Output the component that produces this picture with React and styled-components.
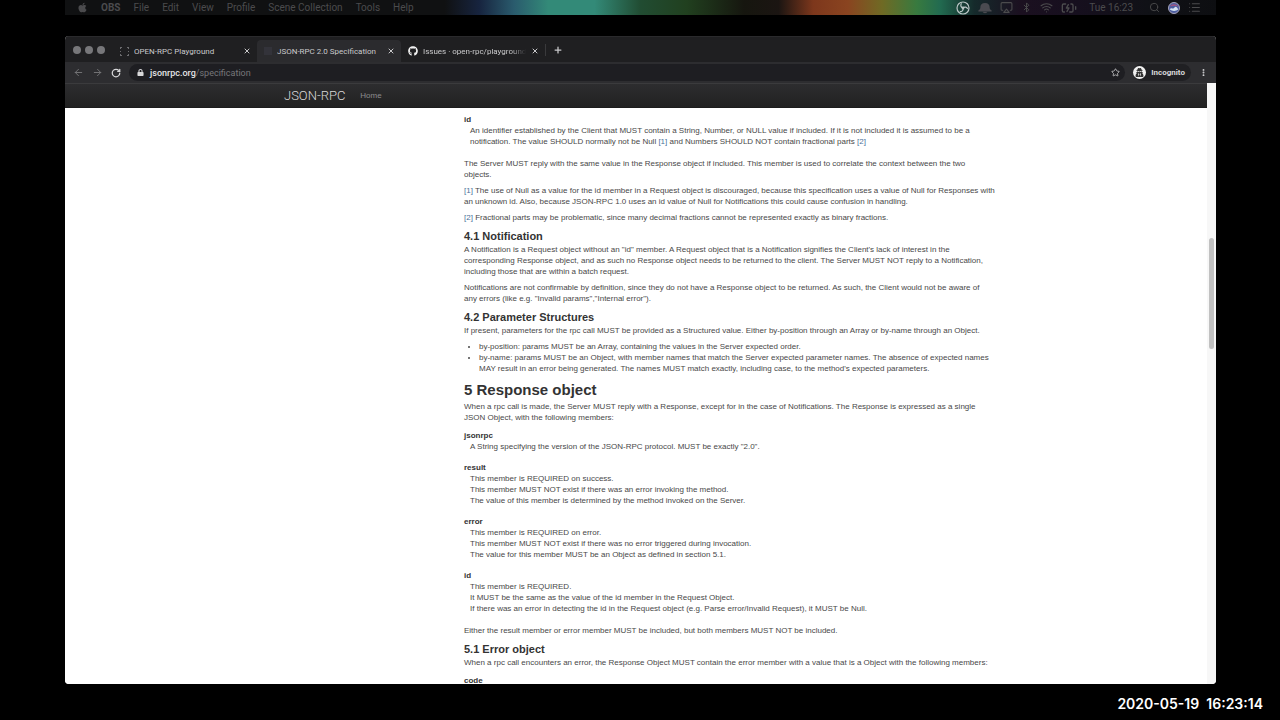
import React from 'react';
import styled, { createGlobalStyle } from 'styled-components';
import {
  FaApple,
  FaGithub,
  FaLock,
  FaUserSecret,
} from 'react-icons/fa';
import {
  Airplay,
  ArrowLeft,
  ArrowRight,
  BatteryCharging,
  Bluetooth,
  List,
  MoreVertical,
  Plus,
  RotateCw,
  Search,
  Star,
  Wifi,
  X,
} from 'lucide-react';

const GlobalStyle = createGlobalStyle`
  * {
    box-sizing: border-box;
  }

  body {
    margin: 0;
    background: #000;
    font-family: Roboto, sans-serif;
  }
`;

const menus = ['File', 'Edit', 'View', 'Profile', 'Scene Collection', 'Tools', 'Help'];

const ObsIcon = () => (
  <svg width="14" height="14" viewBox="0 0 14 14" fill="none" stroke="#b9c4c4" strokeWidth="1.2">
    <circle cx="7" cy="7" r="6" />
    <path d="M7 7C4.6 6.4 4.2 3.8 5.6 2.4" />
    <path d="M7 7C8.7 5.2 11.1 6.2 11.6 8" />
    <path d="M7 7C7.7 9.4 5.6 11 3.8 10.5" />
    <circle cx="7" cy="7" r="0.8" fill="#b9c4c4" />
  </svg>
);

const BellIcon = () => (
  <svg width="14" height="12" viewBox="0 0 14 12" fill="#4a4a50">
    <path d="M7 1c3.2 0 4.600 1.800 4.600 4 0 1.900.5 2.600 1.900 3.400.6.400.4 1-.2 1H.7c-.6 0-.8-.6-.2-1C1.900 7.600 2.400 6.900 2.400 5 2.400 2.800 3.800 1 7 1z" />
    <path d="M4.500 9.800h5c-.4.900-1.300 1.400-2.500 1.400s-2.100-.5-2.500-1.400z" />
  </svg>
);

const SiriIcon = () => (
  <svg width="12" height="12" viewBox="0 0 12 12">
    <circle cx="6" cy="6" r="5.500" fill="#4d5ea0" stroke="#a7a3b8" />
    <path d="M2 4.500C3.500 1.500 8.500 1.500 10 4.500 8 3.600 4 3.600 2 4.500z" fill="#a8557f" />
    <path d="M1.800 7.500C3.500 4.600 5 8.200 6.500 5.600c1-1.500 2.500-.6 3.700 1.900-1.800 1.700-6 2-8.400 0z" fill="#d5e3f2" />
  </svg>
);

const FrameIcon = () => (
  <svg width="9" height="9" viewBox="0 0 9 9" fill="#6c6c6f">
    <path d="M0 0h2v1H1v1H0zM7 0h2v2H8V1H7zM0 4h1v1H0zM8 4h1v1H8zM0 7h1v1h1v1H0zM8 7h1v2H7V8h1z" />
  </svg>
);

const App = () => {
  return (
    <Desktop>
      <GlobalStyle />
      <MenuBar>
        <FaApple size={11} />
        <MenuButton $bold>OBS</MenuButton>
        {menus.map(name => (
          <MenuButton key={name}>{name}</MenuButton>
        ))}
        <Status>
          <ObsIcon />
          <BellIcon />
          <Airplay size={13} />
          <Bluetooth size={11} />
          <Wifi size={13} />
          <BatteryCharging size={16} />
          <Clock>Tue 16:23</Clock>
          <Search size={11} />
          <SiriIcon />
          <List size={13} />
        </Status>
      </MenuBar>

      <Window>
        <TabStrip>
          <Lights>
            <Light />
            <Light />
            <Light />
          </Lights>
          <Tab>
            <FrameIcon />
            <TabTitle>OPEN-RPC Playground</TabTitle>
            <TabClose aria-label="Close tab">
              <X size={8} strokeWidth={3} />
            </TabClose>
          </Tab>
          <Tab $active>
            <BlankIcon />
            <TabTitle>JSON-RPC 2.0 Specification</TabTitle>
            <TabClose aria-label="Close tab">
              <X size={8} strokeWidth={3} />
            </TabClose>
          </Tab>
          <Tab>
            <FaGithub size={10} color="#f0f0f0" />
            <TabTitle $fade>Issues · open-rpc/playground</TabTitle>
            <TabClose aria-label="Close tab">
              <X size={8} strokeWidth={3} />
            </TabClose>
          </Tab>
          <NewTab aria-label="New tab">
            <Plus size={10} strokeWidth={3} />
          </NewTab>
        </TabStrip>

        <Toolbar>
          <ToolButton aria-label="Back" $dim>
            <ArrowLeft size={11} />
          </ToolButton>
          <ToolButton aria-label="Forward" $dim>
            <ArrowRight size={11} />
          </ToolButton>
          <ToolButton aria-label="Reload">
            <RotateCw size={10} strokeWidth={3} />
          </ToolButton>
          <Address>
            <FaLock size={7} />
            <Url>
              <b>jsonrpc.org</b>/specification
            </Url>
            <ToolButton aria-label="Bookmark">
              <Star size={9} />
            </ToolButton>
          </Address>
          <Incognito>
            <Avatar>
              <FaUserSecret size={9} />
            </Avatar>
            Incognito
          </Incognito>
          <ToolButton aria-label="Menu">
            <MoreVertical size={9} strokeWidth={3} />
          </ToolButton>
        </Toolbar>

        <Viewport>
          <Page>
            <NavBar>
              <NavInner>
                <Brand href="#">JSON-RPC</Brand>
                <NavLink href="#">Home</NavLink>
              </NavInner>
            </NavBar>
            <Article>
              <dl>
                <dt>id</dt>
                <dd>
                  An identifier established by the Client that MUST contain a String, Number, or NULL value if included. If it is not included it is assumed to be a<br />
                  notification. The value SHOULD normally not be Null <a href="#n1">[1]</a> and Numbers SHOULD NOT contain fractional parts <a href="#n2">[2]</a>
                </dd>
              </dl>
              <p>
                The Server MUST reply with the same value in the Response object if included. This member is used to correlate the context between the two<br />
                objects.
              </p>
              <p>
                <a href="#n1">[1]</a> The use of Null as a value for the id member in a Request object is discouraged, because this specification uses a value of Null for Responses with<br />
                an unknown id. Also, because JSON-RPC 1.0 uses an id value of Null for Notifications this could cause confusion in handling.
              </p>
              <p>
                <a href="#n2">[2]</a> Fractional parts may be problematic, since many decimal fractions cannot be represented exactly as binary fractions.
              </p>

              <h3>4.1 Notification</h3>
              <p>
                A Notification is a Request object without an "id" member. A Request object that is a Notification signifies the Client's lack of interest in the<br />
                corresponding Response object, and as such no Response object needs to be returned to the client. The Server MUST NOT reply to a Notification,<br />
                including those that are within a batch request.
              </p>
              <p>
                Notifications are not confirmable by definition, since they do not have a Response object to be returned. As such, the Client would not be aware of<br />
                any errors (like e.g. "Invalid params","Internal error").
              </p>

              <h3>4.2 Parameter Structures</h3>
              <p>
                If present, parameters for the rpc call MUST be provided as a Structured value. Either by-position through an Array or by-name through an Object.
              </p>
              <ul>
                <li>by-position: params MUST be an Array, containing the values in the Server expected order.</li>
                <li>
                  by-name: params MUST be an Object, with member names that match the Server expected parameter names. The absence of expected names<br />
                  MAY result in an error being generated. The names MUST match exactly, including case, to the method's expected parameters.
                </li>
              </ul>

              <h2>5 Response object</h2>
              <p>
                When a rpc call is made, the Server MUST reply with a Response, except for in the case of Notifications. The Response is expressed as a single<br />
                JSON Object, with the following members:
              </p>
              <dl>
                <dt>jsonrpc</dt>
                <dd>A String specifying the version of the JSON-RPC protocol. MUST be exactly "2.0".</dd>
                <dt>result</dt>
                <dd>
                  This member is REQUIRED on success.<br />
                  This member MUST NOT exist if there was an error invoking the method.<br />
                  The value of this member is determined by the method invoked on the Server.
                </dd>
                <dt>error</dt>
                <dd>
                  This member is REQUIRED on error.<br />
                  This member MUST NOT exist if there was no error triggered during invocation.<br />
                  The value for this member MUST be an Object as defined in section 5.1.
                </dd>
                <dt>id</dt>
                <dd>
                  This member is REQUIRED.<br />
                  It MUST be the same as the value of the id member in the Request Object.<br />
                  If there was an error in detecting the id in the Request object (e.g. Parse error/Invalid Request), it MUST be Null.
                </dd>
              </dl>
              <p>Either the result member or error member MUST be included, but both members MUST NOT be included.</p>

              <h3>5.1 Error object</h3>
              <p>When a rpc call encounters an error, the Response Object MUST contain the error member with a value that is a Object with the following members:</p>
              <dl>
                <dt>code</dt>
              </dl>
            </Article>
          </Page>
          <Scrollbar>
            <Thumb />
          </Scrollbar>
        </Viewport>
      </Window>

      <Stamp>2020-05-19{'  '}16:23:14</Stamp>
    </Desktop>
  );
};

const Desktop = styled.div`
  display: flex;
  flex-direction: column;
  height: 100vh;
  padding: 0 64px 0 65px;
`;

const Button = styled.button`
  display: flex;
  align-items: center;
  padding: 0;
  border: 0;
  background: transparent;
  color: inherit;
  font: inherit;
`;

const MenuBar = styled.header`
  display: flex;
  align-items: center;
  flex: none;
  gap: 13px;
  height: 15px;
  margin-bottom: 21px;
  padding: 0 15px 0 12px;
  color: #4b4b4d;
  font-size: 10px;
  background: linear-gradient(
    90deg,
    #101112 0%,
    #101112 33%,
    #17243f 36%,
    #2a5b6d 39%,
    #338a78 42%,
    #338a78 46%,
    #214c32 50%,
    #21401f 54%,
    #16160f 59%,
    #1b1512 62%,
    #7d371c 65%,
    #8a4420 68%,
    #6f6a24 71%,
    #387a3f 74%,
    #226b50 76%,
    #152a2b 79%,
    #1b1020 83%,
    #160f1e 88%,
    #101116 94%,
    #0d0e11 100%
  );
`;

const MenuButton = styled(Button)`
  font-weight: ${props => (props.$bold ? 700 : 400)};
`;

const Status = styled.div`
  display: flex;
  align-items: center;
  gap: 8px;
  margin-left: auto;
`;

const Clock = styled.span`
  margin: 0 8px 0 4px;
`;

const Window = styled.main`
  display: flex;
  flex: 1;
  flex-direction: column;
  min-height: 0;
  overflow: hidden;
  border-radius: 4px;
  background: #fff;
`;

const TabStrip = styled.div`
  display: flex;
  align-items: center;
  flex: none;
  height: 26px;
  padding-left: 8px;
  border-top: 1px solid #2a2a2c;
  background: #1f1f21;
  color: #c9c9cb;
  font-size: 8px;
`;

const Lights = styled.div`
  display: flex;
  gap: 4px;
  margin-right: 8px;
`;

const Light = styled.span`
  width: 8px;
  height: 8px;
  border-radius: 50%;
  background: #77777a;
`;

const Tab = styled.div`
  display: flex;
  align-items: center;
  align-self: flex-end;
  gap: 5px;
  width: 144px;
  height: 22px;
  padding: 0 6px 0 7px;
  border-radius: 4px 4px 0 0;
  background: ${props => (props.$active ? '#2b2b2e' : 'transparent')};
`;

const BlankIcon = styled.span`
  flex: none;
  width: 8px;
  height: 8px;
  background: #33333a;
`;

const TabTitle = styled.span`
  flex: 1;
  overflow: hidden;
  white-space: nowrap;
  mask-image: ${props => (props.$fade ? 'linear-gradient(90deg, #000 85%, transparent)' : 'none')};
`;

const TabClose = styled(Button)`
  flex: none;
`;

const NewTab = styled(Button)`
  height: 12px;
  padding-left: 7px;
  border-left: 1px solid #3a3a3c;
`;

const Toolbar = styled.div`
  display: flex;
  align-items: center;
  flex: none;
  gap: 8px;
  height: 21px;
  padding: 0 8px;
  background: #2d2d30;
  color: #d8d8da;
  font-size: 9px;
`;

const ToolButton = styled(Button)`
  color: ${props => (props.$dim ? '#77777a' : '#d8d8da')};
`;

const Address = styled.div`
  display: flex;
  align-items: center;
  flex: 1;
  gap: 6px;
  height: 17px;
  padding: 0 5px 0 8px;
  border-radius: 9px;
  background: #1e1e22;
`;

const Url = styled.span`
  flex: 1;
  color: #77777a;

  b {
    color: #e4e4e6;
    font-weight: 500;
  }
`;

const Incognito = styled.div`
  display: flex;
  align-items: center;
  gap: 5px;
  height: 17px;
  padding-right: 6px;
  border-radius: 9px;
  background: #202023;
  font-size: 8px;
  font-weight: 700;
`;

const Avatar = styled.span`
  display: flex;
  align-items: center;
  justify-content: center;
  width: 13px;
  height: 13px;
  border-radius: 50%;
  background: #f1f1f1;
  color: #333;
`;

const Viewport = styled.div`
  display: flex;
  flex: 1;
  min-height: 0;
`;

const Page = styled.div`
  flex: 1;
  min-width: 0;
  overflow: hidden;
  background: #fff;
`;

const NavBar = styled.nav`
  height: 25px;
  border-top: 1px solid #3b3b3d;
  border-bottom: 1px solid #1c1c1c;
  background: linear-gradient(#2d2d2f, #212121);
`;

const NavInner = styled.div`
  display: flex;
  align-items: center;
  gap: 15px;
  max-width: 704px;
  height: 22px;
  margin: 0 auto;
`;

const Brand = styled.a`
  color: #d8d8d8;
  font: 300 13px Roboto, sans-serif;
  text-decoration: none;
`;

const NavLink = styled.a`
  color: #8c8c8e;
  font: 8px 'Liberation Sans', sans-serif;
  text-decoration: none;
`;

const Article = styled.article`
  max-width: 704px;
  margin: 0 auto;
  padding: 4px 0 0 180px;
  color: #484848;
  font: 8px/11px 'Liberation Sans', Arial, sans-serif;
  white-space: nowrap;

  a {
    color: #4a7199;
    text-decoration: none;
  }

  p {
    margin: 0 0 5px;
  }

  h2,
  h3 {
    margin: 0;
    color: #333;
  }

  h2 {
    font-size: 15px;
    line-height: 22px;
  }

  h3 {
    font-size: 11px;
    line-height: 16px;
  }

  ul {
    margin: 0 0 5px;
    padding-left: 15px;
  }

  dl {
    margin: 0;
    padding-top: 3px;
  }

  dt {
    color: #333;
    font-weight: 700;
    line-height: 10px;
  }

  dd {
    margin: 0 0 11px;
    padding-left: 6px;
  }
`;

const Scrollbar = styled.div`
  width: 9px;
  padding: 155px 2px 2px;
  background: #f7f7f7;
`;

const Thumb = styled.div`
  width: 5px;
  height: 111px;
  border-radius: 3px;
  background: #c1c1c1;
`;

const Stamp = styled.footer`
  flex: none;
  height: 36px;
  margin-right: -47px;
  padding-top: 10px;
  color: #fff;
  font-family: Inter, sans-serif;
  font-size: 14px;
  font-weight: 600;
  line-height: 20px;
  text-align: right;
  white-space: pre;
`;

export default App;
